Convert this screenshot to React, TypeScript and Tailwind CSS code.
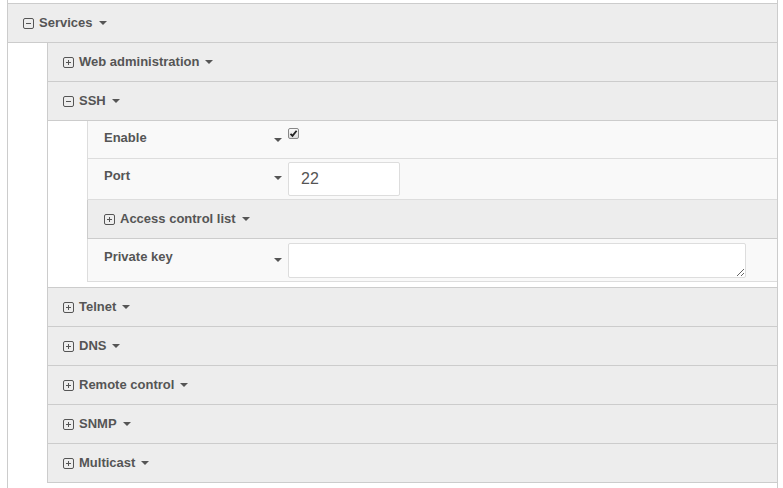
import React from 'react';

const Caret = ({ className = 'ml-[6px]' }: { className?: string }) => (
  <span
    className={`inline-block w-0 h-0 shrink-0 border-t-[4px] border-x-[4px] border-x-transparent border-t-[#555] ${className}`}
  />
);

const ToggleIcon = ({ open }: { open: boolean }) => (
  <svg width="11" height="11" viewBox="0 0 11 11" className="shrink-0">
    <rect x="0.5" y="0.5" width="10" height="10" rx="1.5" fill="none" stroke="#555" />
    <path d="M3 5.5h5" stroke="#555" />
    {!open && <path d="M5.5 3v5" stroke="#555" />}
  </svg>
);

interface HeaderProps {
  title: string;
  open?: boolean;
  first?: boolean;
  inner?: boolean;
}

const Header: React.FC<HeaderProps> = ({ title, open = false, first = false, inner = false }) => (
  <div
    className={`flex items-center bg-[#ededed] border-b border-[#ccc] ${
      first ? 'h-[40px] border-t' : 'h-[39px]'
    } ${inner ? 'pl-[16px] border-l' : 'pl-[15px]'}`}
  >
    <ToggleIcon open={open} />
    <span className="ml-[5px] text-[13px] font-bold text-[#555] leading-[18px]">{title}</span>
    <Caret />
  </div>
);

const Group: React.FC<{ title: string }> = ({ title }) => (
  <div className="border-l border-[#ccc]">
    <Header title={title} />
  </div>
);

interface FieldProps {
  label: string;
  rowClass: string;
  labelClass: string;
  caretClass: string;
  children: React.ReactNode;
}

const Field: React.FC<FieldProps> = ({ label, rowClass, labelClass, caretClass, children }) => (
  <div className={`flex items-start bg-[#f9f9f9] border-l border-b border-[#ddd] pl-[16px] ${rowClass}`}>
    <div className="flex items-start justify-between w-[184px] shrink-0">
      <span className={`text-[13px] font-bold text-[#555] leading-[18px] ${labelClass}`}>{label}</span>
      <Caret className={`mr-[6px] ${caretClass}`} />
    </div>
    {children}
  </div>
);

const CheckBox = () => (
  <div className="mt-[7px] w-[11px] h-[11px] rounded-[2px] border border-[#888] bg-gradient-to-b from-[#fbfbfb] to-[#dcdcdc] flex items-center justify-center">
    <svg width="9" height="9" viewBox="0 0 9 9">
      <path d="M1.5 4.8 L3.5 6.8 L7.6 1.8" fill="none" stroke="#222" strokeWidth="1.8" />
    </svg>
  </div>
);

export default function App() {
  return (
    <div className="w-[783px] h-[488px] overflow-hidden bg-white font-['Liberation_Sans',Arial,sans-serif]">
      <div className="ml-[7px] w-[771px] pt-[3px] min-h-[488px] border-l border-r border-[#ccc]">
        <Header title="Services" open first />
        <div className="pl-[39px] pb-[5px]">
          <Group title="Web administration" />
          <div className="border-l border-[#ccc]">
            <Header title="SSH" open />
            <div className="pl-[39px] pb-[5px] border-b border-[#ccc]">
              <Field label="Enable" rowClass="h-[38px]" labelClass="mt-[8px]" caretClass="mt-[17px]">
                <CheckBox />
              </Field>
              <Field label="Port" rowClass="h-[41px]" labelClass="mt-[8px]" caretClass="mt-[17px]">
                <input
                  readOnly
                  value="22"
                  className="mt-[3px] w-[112px] h-[34px] px-[12px] bg-white border border-[#ddd] rounded-[2px] text-[16px] text-[#555] outline-none"
                />
              </Field>
              <Header title="Access control list" inner />
              <Field label="Private key" rowClass="h-[43px]" labelClass="mt-[9px]" caretClass="mt-[19px]">
                <textarea
                  readOnly
                  className="mt-[4px] w-[458px] h-[35px] bg-white border border-[#ddd] rounded-[2px] outline-none"
                />
              </Field>
            </div>
          </div>
          <Group title="Telnet" />
          <Group title="DNS" />
          <Group title="Remote control" />
          <Group title="SNMP" />
          <Group title="Multicast" />
        </div>
      </div>
    </div>
  );
}
